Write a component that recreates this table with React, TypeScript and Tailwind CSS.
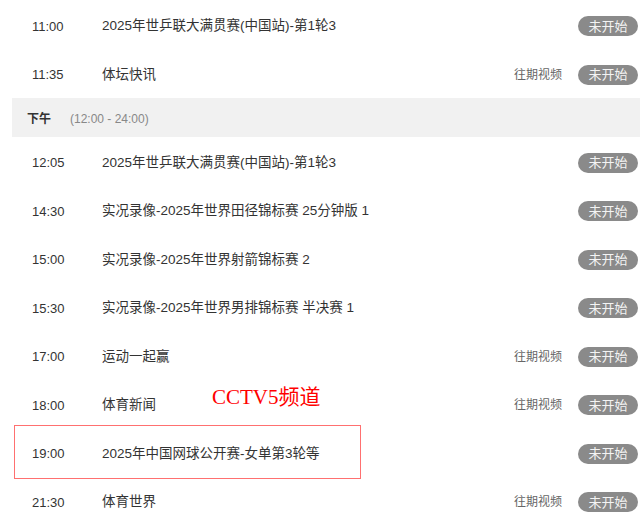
const FONT = { fontFamily: '"Liberation Sans", "Noto Sans CJK SC", sans-serif' };

interface Program {
  time: string;
  title: string;
  replay?: boolean;
  marked?: boolean;
}

const morning: Program[] = [
  { time: '11:00', title: '2025年世乒联大满贯赛(中国站)-第1轮3' },
  { time: '11:35', title: '体坛快讯', replay: true },
];

const afternoon: Program[] = [
  { time: '12:05', title: '2025年世乒联大满贯赛(中国站)-第1轮3' },
  { time: '14:30', title: '实况录像-2025年世界田径锦标赛 25分钟版 1' },
  { time: '15:00', title: '实况录像-2025年世界射箭锦标赛 2' },
  { time: '15:30', title: '实况录像-2025年世界男排锦标赛 半决赛 1' },
  { time: '17:00', title: '运动一起赢', replay: true },
  { time: '18:00', title: '体育新闻', replay: true },
  { time: '19:00', title: '2025年中国网球公开赛-女单第3轮等', marked: true },
  { time: '21:30', title: '体育世界', replay: true },
];

function Row({ item }: { item: Program }) {
  return (
    <div className="relative flex items-center h-[48.5px] pt-[3px] pl-[32px] pr-[2px] text-[#333]">
      <span className="w-[70px] shrink-0 text-[13px]">{item.time}</span>
      <span className="flex-1 text-[13.5px]">{item.title}</span>
      {item.replay && <span className="mr-4 text-[12px] text-[#666]">往期视频</span>}
      <span className="flex items-center justify-center w-[60px] h-[20px] rounded-full bg-[#8a8a8a] text-[13px] text-[#f4f4f4]">
        未开始
      </span>
      {item.marked && (
        <div className="absolute left-[14px] top-[-3px] w-[347px] h-[54px] border border-[#ff7070]" />
      )}
    </div>
  );
}

export default function App() {
  return (
    <div className="relative w-[640px] h-[531px] bg-white overflow-hidden pt-[0.5px]" style={FONT}>
      {morning.map((p) => (
        <Row key={p.time} item={p} />
      ))}
      <div className="flex items-center ml-[12px] h-[39.5px] pt-[3px] bg-[#f1f1f1] pl-[15px] text-[12px]">
        <span className="font-bold text-[#333] w-[43px]">下午</span>
        <span className="text-[#888]">(12:00 - 24:00)</span>
      </div>
      {afternoon.map((p) => (
        <Row key={p.time} item={p} />
      ))}
      <div
        className="absolute left-[212px] top-[382px] text-[21px] leading-[30px] text-[#ff0000]"
        style={{ fontFamily: '"Liberation Serif", "Noto Sans CJK SC", serif' }}
      >
        CCTV5频道
      </div>
    </div>
  );
}
